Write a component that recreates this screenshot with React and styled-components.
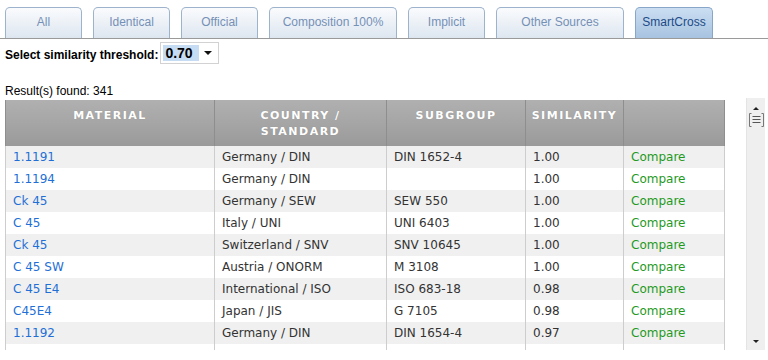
import styled, { createGlobalStyle } from "styled-components"

const GlobalStyle = createGlobalStyle`
    html, body {
        margin: 0;
        padding: 0;
        background: #fff;
    }
    body {
        font-family: "Liberation Sans", Arial, sans-serif;
        font-size: 12px;
        color: #000;
    }
`

const tabs = [
    { label: "All", width: 77 },
    { label: "Identical", width: 77 },
    { label: "Official", width: 77 },
    { label: "Composition 100%", width: 128 },
    { label: "Implicit", width: 77 },
    { label: "Other Sources", width: 128 },
    { label: "SmartCross", width: 78, active: true },
]

const rows = [
    ["1.1191", "Germany / DIN", "DIN 1652-4", "1.00"],
    ["1.1194", "Germany / DIN", "", "1.00"],
    ["Ck 45", "Germany / SEW", "SEW 550", "1.00"],
    ["C 45", "Italy / UNI", "UNI 6403", "1.00"],
    ["Ck 45", "Switzerland / SNV", "SNV 10645", "1.00"],
    ["C 45 SW", "Austria / ONORM", "M 3108", "1.00"],
    ["C 45 E4", "International / ISO", "ISO 683-18", "0.98"],
    ["C45E4", "Japan / JIS", "G 7105", "0.98"],
    ["1.1192", "Germany / DIN", "DIN 1654-4", "0.97"],
]

const columns = [
    { title: "MATERIAL", width: 209 },
    { title: "COUNTRY /\nSTANDARD", width: 172 },
    { title: "SUBGROUP", width: 139 },
    { title: "SIMILARITY", width: 98 },
    { title: "", width: 101 },
]

export default function App() {
    return (
        <>
            <GlobalStyle />
            <TabBar>
                {tabs.map((t) => (
                    <Tab key={t.label} $width={t.width} $active={t.active}>
                        {t.label}
                    </Tab>
                ))}
            </TabBar>

            <ThresholdRow>
                <Label>Select similarity threshold:</Label>
                <Select>
                    <SelectValue>0.70</SelectValue>
                    <SelectArrow />
                </Select>
            </ThresholdRow>

            <ResultCount>Result(s) found: 341</ResultCount>

            <ScrollArea>
                <Viewport>
                    <Table>
                        <colgroup>
                            {columns.map((c, i) => (
                                <col key={i} style={{ width: c.width }} />
                            ))}
                        </colgroup>
                        <thead>
                            <tr>
                                {columns.map((c, i) => (
                                    <Th key={i}>{c.title}</Th>
                                ))}
                            </tr>
                        </thead>
                        <tbody>
                            {rows.map((r, i) => (
                                <Row key={i} $shaded={i % 2 === 0}>
                                    <Td><MaterialLink>{r[0]}</MaterialLink></Td>
                                    <Td>{r[1]}</Td>
                                    <Td>{r[2]}</Td>
                                    <Td>{r[3]}</Td>
                                    <Td><CompareLink>Compare</CompareLink></Td>
                                </Row>
                            ))}
                            <Row $shaded={false}>
                                <Td /><Td /><Td /><Td /><Td />
                            </Row>
                        </tbody>
                    </Table>
                </Viewport>
                <ScrollTrack>
                    <ArrowUp />
                    <Thumb>
                        <svg width="17" height="14" viewBox="0 0 17 14">
                            <path d="M3.5 0.5 H1.5 V13.5 H3.5 M13.5 0.5 H15.5 V13.5 H13.5" fill="none" stroke="#777" />
                            <path d="M4.5 3.5 H12.5 M4.5 6.5 H12.5 M4.5 9.5 H12.5" fill="none" stroke="#555" />
                        </svg>
                    </Thumb>
                    <TrackSpacer />
                    <ArrowDown />
                </ScrollTrack>
            </ScrollArea>
        </>
    )
}

const TabBar = styled.nav`
    display: flex;
    gap: 11px;
    padding: 7px 0 0 5px;
    height: 31px;
    border-bottom: 1px solid #9a9a9a;
`

const Tab = styled.div`
    box-sizing: border-box;
    width: ${(p) => p.$width}px;
    height: 31px;
    display: flex;
    align-items: center;
    justify-content: center;
    padding-bottom: 2px;
    font-family: "Liberation Sans", Arial, sans-serif;
    font-size: 12px;
    color: ${(p) => (p.$active ? "#1d4a86" : "#7590b6")};
    border: 1px solid ${(p) => (p.$active ? "#87a6c8" : "#9db2cc")};
    border-bottom: none;
    border-radius: 5px 5px 0 0;
    background: ${(p) =>
        p.$active
            ? "linear-gradient(#cbdef2, #a7c3e0)"
            : "linear-gradient(#fafbfd, #dde6f0)"};
`

const ThresholdRow = styled.div`
    display: flex;
    align-items: center;
    gap: 2px;
    margin-top: 3px;
    padding-left: 5px;
    height: 22px;
`

const Label = styled.span`
    font-weight: bold;
    font-size: 12px;
    padding-top: 4px;
`

const Select = styled.div`
    box-sizing: border-box;
    width: 59px;
    height: 22px;
    border: 1px solid #d2d2d2;
    display: flex;
    align-items: center;
    padding: 0 6px 0 2px;
    justify-content: space-between;
`

const SelectValue = styled.span`
    background: #c6dcf3;
    font-weight: bold;
    font-size: 14px;
    line-height: 16px;
    width: 36px;
    padding-left: 2px;
    box-sizing: border-box;
`

const SelectArrow = styled.span`
    width: 0;
    height: 0;
    border-left: 4px solid transparent;
    border-right: 4px solid transparent;
    border-top: 4px solid #111;
`

const ResultCount = styled.div`
    margin-top: 20px;
    padding-left: 5px;
    font-size: 12px;
    line-height: 14px;
`

const ScrollArea = styled.div`
    display: flex;
    height: 252px;
    width: 765px;
`

const Viewport = styled.div`
    flex: 1;
    overflow: hidden;
    padding: 2px 0 0 5px;
`

const Table = styled.table`
    border-collapse: collapse;
    table-layout: fixed;
    width: 719px;
    font-family: "DejaVu Sans", Verdana, sans-serif;
    font-size: 12px;
`

const Th = styled.th`
    height: 46px;
    box-sizing: border-box;
    padding: 8px 4px 0;
    vertical-align: top;
    white-space: pre-line;
    line-height: 16px;
    font-size: 11px;
    font-weight: bold;
    letter-spacing: 1.5px;
    color: #fff;
    text-shadow: 0 0 1px rgba(0, 0, 0, 0.15);
    background: linear-gradient(#b0b0b0, #9a9a9a);
    border-left: 1px solid #8e8e8e;
    border-right: 1px solid #8e8e8e;
`

const Row = styled.tr`
    height: 22px;
    background: ${(p) => (p.$shaded ? "#f0f0f0" : "#fff")};
`

const Td = styled.td`
    padding: 0 6px 0 7px;
    height: 22px;
    box-sizing: border-box;
    line-height: 22px;
    color: #333;
    white-space: nowrap;
    border-left: 1px solid #cdcdcd;
    border-right: 1px solid #cdcdcd;
`

const MaterialLink = styled.span`
    color: #1f6fd6;
`

const CompareLink = styled.span`
    color: #1f9a1f;
`

const ScrollTrack = styled.div`
    width: 19px;
    box-sizing: border-box;
    background: #efefef;
    border-left: 1px solid #e4e4e4;
    display: flex;
    flex-direction: column;
    align-items: center;
    padding: 9px 0 7px;
`

const ArrowUp = styled.span`
    width: 0;
    height: 0;
    border-left: 3px solid transparent;
    border-right: 3px solid transparent;
    border-bottom: 3px solid #222;
`

const ArrowDown = styled.span`
    width: 0;
    height: 0;
    border-left: 3px solid transparent;
    border-right: 3px solid transparent;
    border-top: 3px solid #222;
`

const Thumb = styled.div`
    margin-top: 3px;
    display: flex;
`

const TrackSpacer = styled.div`
    flex: 1;
`
